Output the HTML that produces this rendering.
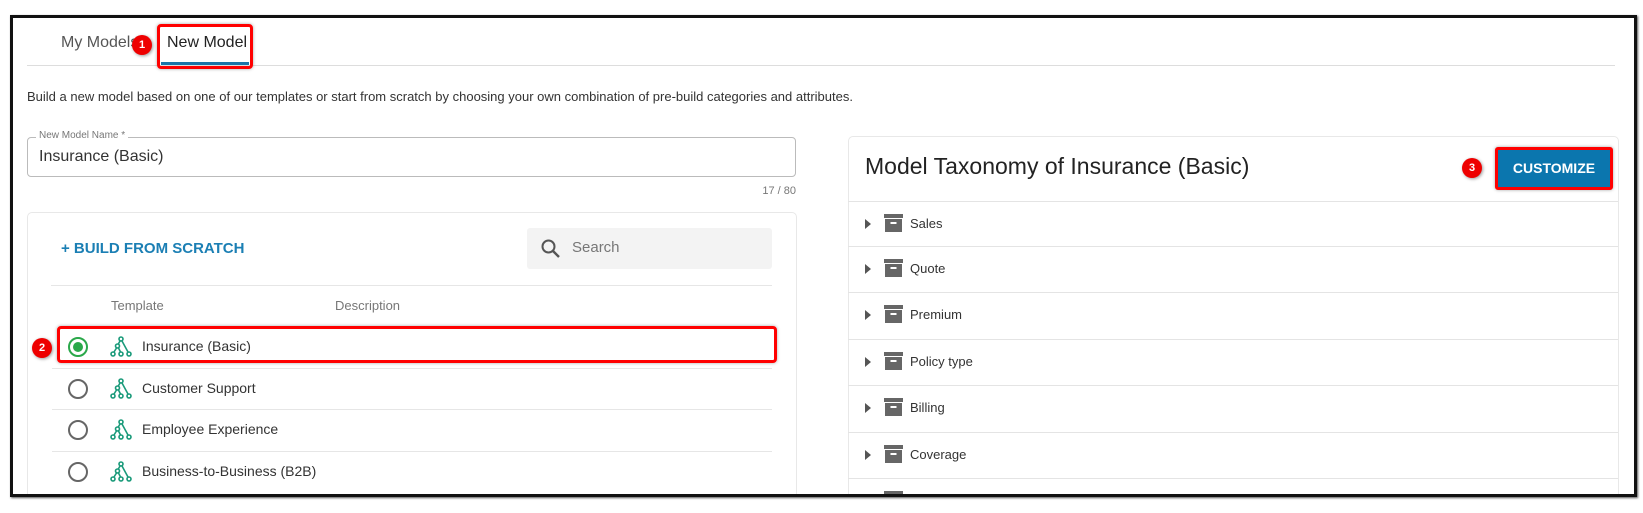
<!DOCTYPE html>
<html><head><meta charset="utf-8">
<style>
*{margin:0;padding:0;box-sizing:border-box}
body{width:1643px;height:513px;background:#fff;position:relative;overflow:hidden;font-family:"Liberation Sans",sans-serif;color:#333}
.a{position:absolute;white-space:nowrap}
.clip{position:absolute;left:0;top:0;width:1643px;height:494px;overflow:hidden}
.badge{position:absolute;width:20px;height:20px;border-radius:50%;background:#e00;color:#fff;font-size:11px;font-weight:bold;text-align:center;line-height:20px;box-shadow:1px 1px 3px rgba(0,0,0,.4)}
.red{position:absolute;border:3px solid #f00;border-radius:4px;box-shadow:0 0 3px rgba(0,0,0,.35)}
.row{position:absolute;left:52px;width:720px;height:41px;border-top:1px solid #e6e6e6}
.radio{position:absolute;left:16px;top:10px;width:20px;height:20px;border-radius:50%;border:2px solid #666}
.rt{position:absolute;left:90px;top:11px;font-size:14px;color:#333}
.ti{position:absolute;left:58px;top:9px}
.tx{position:absolute;left:848px;width:770px;height:46px;border-top:1px solid #e4e4e4}
.tx .ar{position:absolute;left:17px;top:17px;width:0;height:0;border-left:6px solid #555;border-top:5px solid transparent;border-bottom:5px solid transparent}
.tx .bx{position:absolute;left:36px;top:12px}
.tx span{position:absolute;left:62px;top:14px;font-size:13px;color:#333}
</style></head><body>
<div class="clip">
<div class="a" style="left:61px;top:34px;font-size:16px;color:#555">My Models</div>
<div class="a" style="left:167px;top:34px;font-size:16px;color:#222">New Model</div>
<div class="a" style="left:161px;top:62px;width:88px;height:3px;background:#1b75a8"></div>
<div class="a" style="left:27px;top:65px;width:1588px;height:1px;background:#ddd"></div>
<div class="red" style="left:157px;top:24px;width:96px;height:45px"></div>
<div class="badge" style="left:132px;top:35px">1</div>

<div class="a" style="left:27px;top:89px;font-size:13px;color:#333">Build a new model based on one of our templates or start from scratch by choosing your own combination of pre-build categories and attributes.</div>

<div class="a" style="left:27px;top:137px;width:769px;height:40px;border:1px solid #bbb;border-radius:4px"></div>
<div class="a" style="left:36px;top:130px;font-size:10px;color:#777;background:#fff;padding:0 3px">New Model Name *</div>
<div class="a" style="left:39px;top:148px;font-size:16px;color:#333">Insurance (Basic)</div>
<div class="a" style="left:740px;top:185px;font-size:11px;color:#777;width:56px;text-align:right">17 / 80</div>

<div class="a" style="left:27px;top:212px;width:770px;height:300px;border:1px solid #e8e8e8;border-radius:5px"></div>
<div class="a" style="left:61px;top:240px;font-size:15px;font-weight:bold;color:#1b7fb4">+ BUILD FROM SCRATCH</div>
<div class="a" style="left:527px;top:228px;width:245px;height:41px;background:#f3f3f3;border-radius:3px"></div>
<svg class="a" style="left:540px;top:238px" width="22" height="22" viewBox="0 0 22 22"><circle cx="8.5" cy="8.5" r="6" fill="none" stroke="#555" stroke-width="2"/><line x1="13" y1="13" x2="19" y2="19" stroke="#555" stroke-width="2.4"/></svg>
<div class="a" style="left:572px;top:239px;font-size:15px;color:#777">Search</div>
<div class="a" style="left:51px;top:285px;width:721px;height:1px;background:#e6e6e6"></div>
<div class="a" style="left:111px;top:298px;font-size:13px;color:#777">Template</div>
<div class="a" style="left:335px;top:298px;font-size:13px;color:#777">Description</div>

<svg width="0" height="0" style="position:absolute"><defs><g id="tree" fill="none" stroke="#1a9a7a" stroke-width="1.6"><circle cx="11" cy="3" r="2"/><circle cx="7.5" cy="10" r="2"/><circle cx="3" cy="18" r="2"/><circle cx="11" cy="18" r="2"/><circle cx="19" cy="18" r="2"/><line x1="10" y1="5" x2="8.3" y2="8"/><line x1="12" y1="5" x2="18" y2="16"/><line x1="6.5" y1="12" x2="4" y2="16"/><line x1="8.5" y1="12" x2="10.5" y2="16"/></g></defs></svg>

<div class="row" style="top:327px;border-top:none"><div class="radio" style="border-color:#2aa84a"><div style="position:absolute;left:3px;top:3px;width:10px;height:10px;border-radius:50%;background:#2aa84a"></div></div><svg class="ti" width="22" height="22"><use href="#tree"/></svg><div class="rt">Insurance (Basic)</div></div>
<div class="row" style="top:368px"><div class="radio"></div><svg class="ti" width="22" height="22"><use href="#tree"/></svg><div class="rt">Customer Support</div></div>
<div class="row" style="top:409px"><div class="radio"></div><svg class="ti" width="22" height="22"><use href="#tree"/></svg><div class="rt">Employee Experience</div></div>
<div class="row" style="top:451px"><div class="radio"></div><svg class="ti" width="22" height="22"><use href="#tree"/></svg><div class="rt">Business-to-Business (B2B)</div></div>
<div class="red" style="left:57px;top:326px;width:720px;height:37px"></div>
<div class="badge" style="left:32px;top:338px">2</div>

<div class="a" style="left:848px;top:136px;width:771px;height:380px;border:1px solid #e8e8e8;border-radius:5px"></div>
<div class="a" style="left:865px;top:153px;font-size:23px;color:#222">Model Taxonomy of Insurance (Basic)</div>
<div class="a" style="left:1495px;top:147px;width:118px;height:43px;background:#0b76ae;color:#fff;font-size:14px;font-weight:bold;text-align:center;line-height:37px;border:3px solid #f00;border-radius:3px;box-shadow:0 0 3px rgba(0,0,0,.35)">CUSTOMIZE</div>
<div class="badge" style="left:1462px;top:158px">3</div>

<svg width="0" height="0" style="position:absolute"><defs><g id="box"><rect x="0" y="0" width="19" height="4" fill="#666"/><rect x="1" y="5" width="17" height="13" fill="#666"/><rect x="6.5" y="8" width="6" height="2" fill="#fff"/></g></defs></svg>
<div class="tx" style="top:201px"><div class="ar"></div><svg class="bx" width="19" height="19"><use href="#box"/></svg><span>Sales</span></div>
<div class="tx" style="top:246px"><div class="ar"></div><svg class="bx" width="19" height="19"><use href="#box"/></svg><span>Quote</span></div>
<div class="tx" style="top:292px"><div class="ar"></div><svg class="bx" width="19" height="19"><use href="#box"/></svg><span>Premium</span></div>
<div class="tx" style="top:339px"><div class="ar"></div><svg class="bx" width="19" height="19"><use href="#box"/></svg><span>Policy type</span></div>
<div class="tx" style="top:385px"><div class="ar"></div><svg class="bx" width="19" height="19"><use href="#box"/></svg><span>Billing</span></div>
<div class="tx" style="top:432px"><div class="ar"></div><svg class="bx" width="19" height="19"><use href="#box"/></svg><span>Coverage</span></div>
<div class="tx" style="top:478px;height:30px"><svg class="bx" width="19" height="19"><use href="#box"/></svg></div>
</div>
<div class="a" style="left:10px;top:15px;width:1627px;height:482px;border:3px solid #111;box-shadow:1px 1px 2px #555"></div>
</body></html>
